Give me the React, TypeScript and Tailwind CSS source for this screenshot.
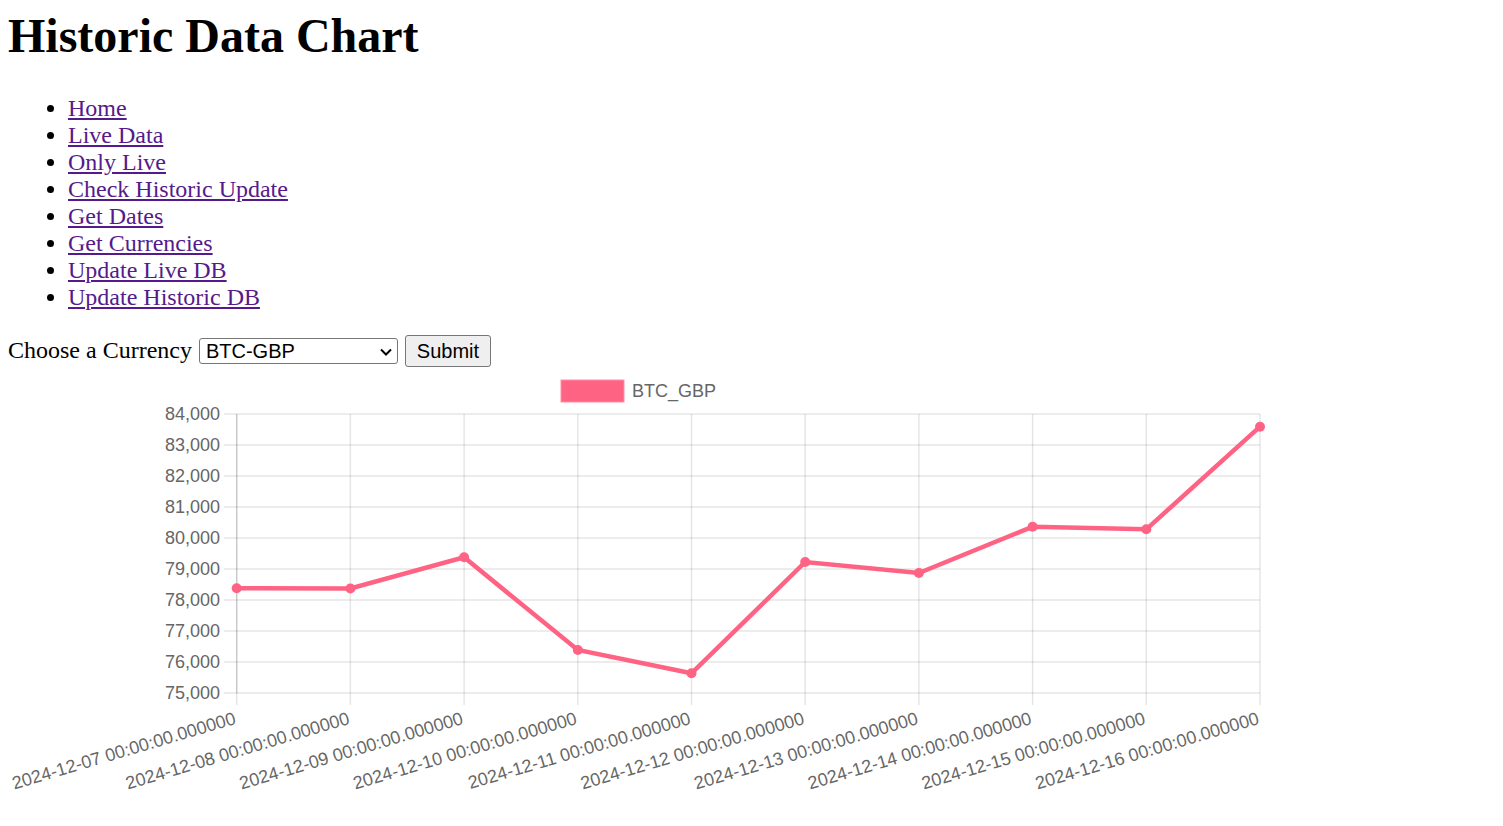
import React from "react";

const links = [
  "Home",
  "Live Data",
  "Only Live",
  "Check Historic Update",
  "Get Dates",
  "Get Currencies",
  "Update Live DB",
  "Update Historic DB",
];

const yLabels = ["84,000", "83,000", "82,000", "81,000", "80,000", "79,000", "78,000", "77,000", "76,000", "75,000"];
const dates = [
  "2024-12-07",
  "2024-12-08",
  "2024-12-09",
  "2024-12-10",
  "2024-12-11",
  "2024-12-12",
  "2024-12-13",
  "2024-12-14",
  "2024-12-15",
  "2024-12-16",
];
const ys = [588.3, 588.5, 557.3, 650, 673.3, 562, 573, 526.7, 529.3, 426.7];
const x0 = 236.7;
const dx = 113.7;
const top = 414;
const step = 31;
const bottom = top + step * 9;

function Chart() {
  const xs = dates.map((_, i) => x0 + dx * i);
  const right = xs[xs.length - 1];
  const pts = xs.map((x, i) => `${x},${ys[i]}`).join(" ");
  return (
    <svg
      width={1487}
      height={440}
      viewBox="8 370 1487 440"
      className="block [font-family:'Liberation_Sans',Arial,sans-serif]"
    >
      {/* legend */}
      <rect x={561} y={380} width={63} height={22} fill="#ff6384" stroke="#ff8fa5" strokeWidth={1} />
      <text x={632} y={391} fontSize={18} fill="#666" dominantBaseline="central">
        BTC_GBP
      </text>
      {/* horizontal grid */}
      {yLabels.map((l, i) => {
        const y = top + step * i;
        return (
          <g key={l}>
            <line x1={224} x2={right} y1={y} y2={y} stroke="rgba(0,0,0,0.1)" strokeWidth={1.5} />
            <text x={220} y={y} fontSize={18} fill="#666" textAnchor="end" dominantBaseline="central">
              {l}
            </text>
          </g>
        );
      })}
      {/* vertical grid */}
      {xs.map((x, i) => (
        <line key={i} x1={x} x2={x} y1={top} y2={bottom + 12} stroke="rgba(0,0,0,0.1)" strokeWidth={1.5} />
      ))}
      <line x1={x0} x2={x0} y1={top} y2={bottom} stroke="rgba(0,0,0,0.12)" strokeWidth={1.5} />
      {/* x labels */}
      {xs.map((x, i) => (
        <text
          key={i}
          transform={`translate(${x - 3} ${bottom + 20}) rotate(-16.5)`}
          x={0}
          y={5}
          fontSize={18}
          fill="#666"
          textAnchor="end"
          dominantBaseline="central"
        >
          {dates[i]} 00:00:00.000000
        </text>
      ))}
      {/* line */}
      <polyline points={pts} fill="none" stroke="#ff6384" strokeWidth={4.5} strokeLinejoin="miter" />
      {xs.map((x, i) => (
        <circle key={i} cx={x} cy={ys[i]} r={5} fill="#ff6384" />
      ))}
    </svg>
  );
}

export default function App() {
  return (
    <div className="bg-white min-h-[826px] px-2 pt-2 text-black [font-family:'Liberation_Serif','Times_New_Roman',serif]">
      <h1 className="text-[48px] font-bold leading-[55px] m-0">Historic Data Chart</h1>
      <ul className="list-disc pl-[60px] mt-[32px] text-[24px] leading-[27px]">
        {links.map((l) => (
          <li key={l}>
            <a href="#" className="text-[#551a8b] underline">
              {l}
            </a>
          </li>
        ))}
      </ul>
      <div className="flex items-start mt-[24px] h-[32px]">
        <span className="mt-[2px] text-[24px] leading-[27px] whitespace-nowrap">Choose a Currency</span>
        <div className="relative ml-[7px] mt-[3px] w-[199px] h-[26px] border border-[#767676] rounded-[3px] bg-white flex items-center pl-[6px] [font-family:'Liberation_Sans',Arial,sans-serif] text-[20px] leading-none">
          <span>BTC-GBP</span>
          <svg className="absolute right-[5px] top-[9px]" width="12" height="8" viewBox="0 0 12 8">
            <path d="M1 1.5 L6 6.5 L11 1.5" fill="none" stroke="#000" strokeWidth="2" />
          </svg>
        </div>
        <button className="ml-[7px] w-[86px] h-[32px] border border-[#767676] rounded-[3px] bg-[#efefef] [font-family:'Liberation_Sans',Arial,sans-serif] text-[20px] leading-none">
          Submit
        </button>
      </div>
      <div className="mt-[3px]">
        <Chart />
      </div>
    </div>
  );
}
